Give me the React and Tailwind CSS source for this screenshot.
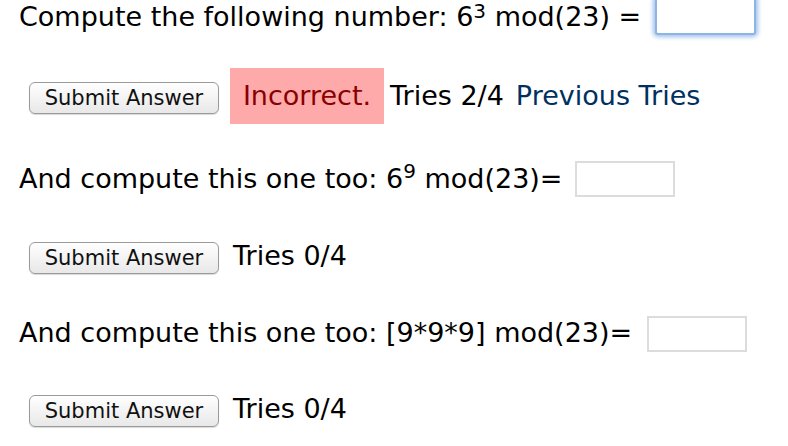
import React from "react";

function SubmitButton() {
    return (
        <button
            type="button"
            className="h-[32px] w-[190px] rounded-[6px] border border-[#9a9a9a] bg-gradient-to-b from-white to-[#e8e8e8] text-[21px] leading-none text-[#111] shadow-[0_1px_1px_rgba(0,0,0,0.15)]"
        >
            Submit Answer
        </button>
    );
}

function AnswerBox({ focused, className }) {
    return (
        <input
            type="text"
            className={
                focused
                    ? "h-[38px] w-[101px] rounded-[3px] border-2 border-[#8cb4e6] bg-white shadow-[0_0_4px_2px_rgba(100,150,220,0.6)] outline-none " + className
                    : "h-[36px] w-[100px] border-2 border-[#dcdcdc] bg-white outline-none " + className
            }
        />
    );
}

export default function App() {
    return (
        <div className="min-h-[446px] bg-white pl-[19px] text-[27px] text-black" style={{ fontFamily: '"DejaVu Sans", Verdana, sans-serif' }}>
            <div className="flex h-[33px] items-center pt-[2px]">
                <span>
                    Compute the following number: 6<sup className="relative -top-[8px] text-[20px] leading-none">3</sup> mod(23) =
                </span>
                <AnswerBox focused className="ml-[14px] -mb-[2px] self-end" />
            </div>

            <div className="mt-[35px] flex h-[56px] items-center">
                <div className="ml-[10px]">
                    <SubmitButton />
                </div>
                <div className="ml-[11px] flex h-[56px] w-[154px] items-center justify-center bg-[#ffaaaa] text-[#880000]">
                    Incorrect.
                </div>
                <span className="ml-[6px]">Tries 2/4</span>
                <a href="#" className="ml-[12px] text-[#00305f]">Previous Tries</a>
            </div>

            <div className="mt-[37px] flex h-[36px] items-center">
                <span>
                    And compute this one too: 6<sup className="relative -top-[10px] text-[20px] leading-none">9</sup> mod(23)=
                </span>
                <AnswerBox className="ml-[12px]" />
            </div>

            <div className="mt-[43px] flex h-[32px] items-center">
                <div className="ml-[10px]">
                    <SubmitButton />
                </div>
                <span className="ml-[14px]">Tries 0/4</span>
            </div>

            <div className="mt-[43px] flex h-[37px] items-center">
                <span>And compute this one too: [9*9*9] mod(23)=</span>
                <AnswerBox className="ml-[15px]" />
            </div>

            <div className="mt-[41px] flex h-[32px] items-center">
                <div className="ml-[10px]">
                    <SubmitButton />
                </div>
                <span className="ml-[14px]">Tries 0/4</span>
            </div>
        </div>
    );
}
